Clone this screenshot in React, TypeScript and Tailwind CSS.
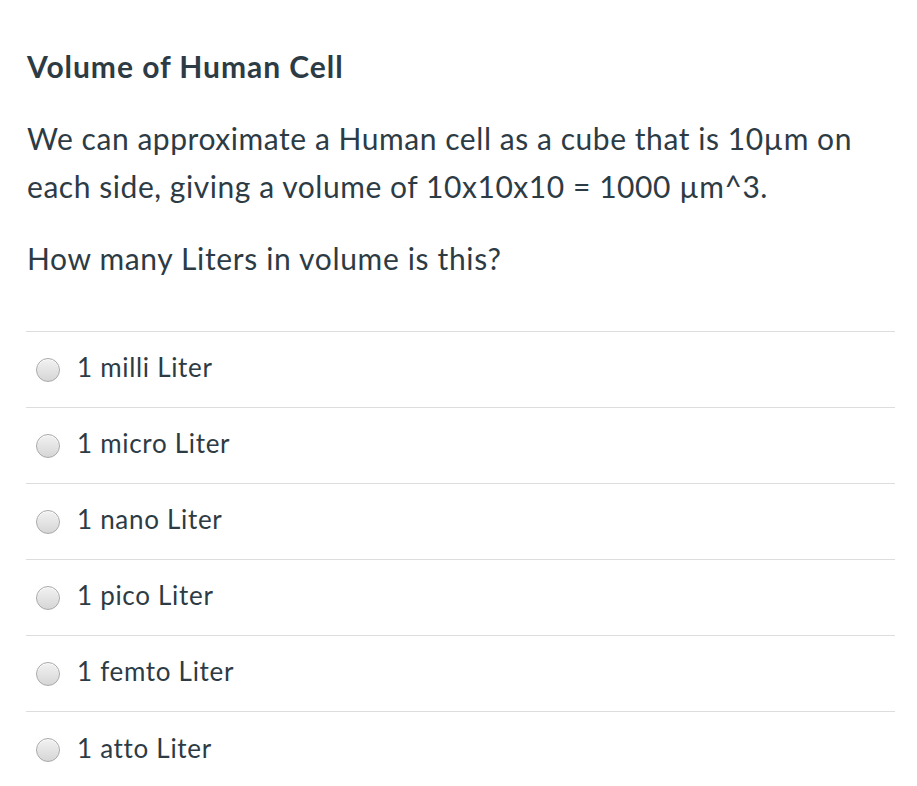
const options = [
  '1 milli Liter',
  '1 micro Liter',
  '1 nano Liter',
  '1 pico Liter',
  '1 femto Liter',
  '1 atto Liter',
];

export default function App() {
  return (
    <div className="min-h-screen bg-white text-[#2d3b45] font-['Lato','Noto_Sans',sans-serif]">
      <div className="pl-[27px] pr-[22px] pt-[46px]">
        <h2 className="text-[30px] font-bold leading-[40px] tracking-[0.95px]">Volume of Human Cell</h2>
        <div className="mt-[28px] text-[30px] leading-[48px] tracking-[0.55px]">
          We can approximate a Human cell as a cube that is 10µm on each side, giving a volume of 10x10x10 = 1000 µm^3.
        </div>
        <div className="mt-[24px] text-[30px] leading-[48px] tracking-[0.65px]">How many Liters in volume is this?</div>
        <div className="mt-[49px] -ml-px border-t border-[#ddd]">
          {options.map((o, i) => (
            <label
              key={o}
              className={`flex items-center gap-[17px] h-[76px] pl-[10px] ${i < options.length - 1 ? 'border-b border-[#ddd]' : ''}`}
            >
              <span className="w-[24px] h-[24px] rounded-full border border-[#aaa] bg-gradient-to-b from-[#f2f2f2] to-[#d6d6d6] shadow-[inset_0_1px_1px_rgba(255,255,255,0.8)]" />
              <span className="text-[26px] tracking-[0.7px] pb-[4px]">{o}</span>
            </label>
          ))}
        </div>
      </div>
    </div>
  );
}
